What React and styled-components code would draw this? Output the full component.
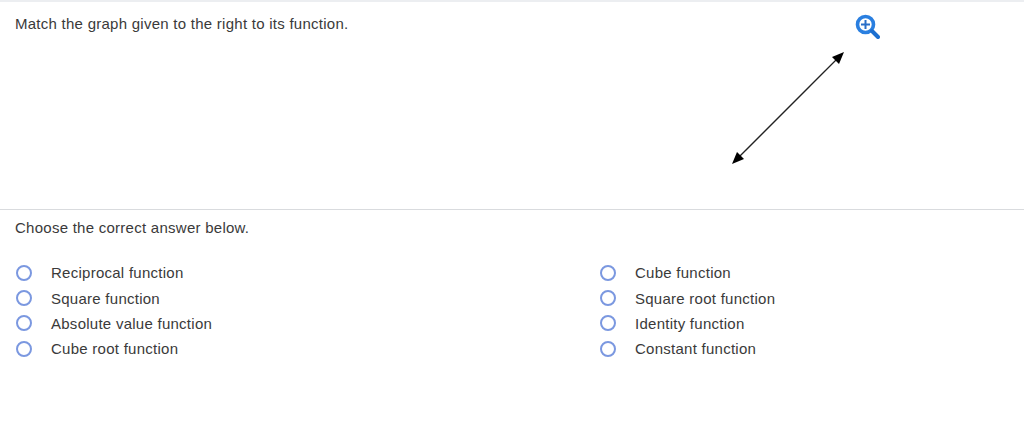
import styled, {createGlobalStyle} from "styled-components";

const GlobalStyle = createGlobalStyle`
  html, body {
    margin: 0;
    padding: 0;
    background: #fff;
  }
`

const Page = styled.div`
  width: 1024px;
  height: 442px;
  overflow: hidden;
  box-sizing: border-box;
  border-top: 2px solid #eceef1;
  font-family: "Liberation Sans", Arial, sans-serif;
  font-size: 15px;
  letter-spacing: 0.26px;
  color: #3a3a3a;
`

const QuestionRow = styled.div`
  display: flex;
  box-sizing: border-box;
  height: 208px;
  border-bottom: 1px solid #d9dbde;
  padding-left: 15px;
`

const Prompt = styled.div`
  width: 716px;
  padding-top: 14px;
  line-height: 16px;
`

const GraphColumn = styled.div`
  display: flex;
  flex-direction: column;
  align-items: flex-start;
`

const ZoomButton = styled.svg`
  display: block;
  width: 26px;
  height: 26px;
  margin: 12px 0 0 123px;
`

const Graph = styled.svg`
  display: block;
  width: 120px;
  height: 120px;
  margin: 6px 0 0 -1px;
`

const Answer = styled.div`
  padding: 10px 0 0 15px;
  line-height: 16px;
`

const Choices = styled.div`
  display: grid;
  grid-template-columns: 584px 300px;
  padding: 24.3px 0 0 16px;
`

const Column = styled.div`
  display: flex;
  flex-direction: column;
`

const Choice = styled.label`
  display: flex;
  align-items: center;
  height: 25.25px;
`

const Radio = styled.span`
  box-sizing: border-box;
  width: 16px;
  height: 16px;
  margin-right: 19px;
  border: 2px solid #7b98e0;
  border-radius: 50%;
  background: #fff;
`

const left = ["Reciprocal function", "Square function", "Absolute value function", "Cube root function"]
const right = ["Cube function", "Square root function", "Identity function", "Constant function"]

export default function App() {
	return (<Page>
		<GlobalStyle/>
		<QuestionRow>
			<Prompt>Match the graph given to the right to its function.</Prompt>
			<GraphColumn>
				<ZoomButton viewBox="0 0 26 26">
					<circle cx="11.5" cy="10.5" r="8" fill="#fff" stroke="#2a7fe0" strokeWidth="3.6"/>
					<path d="M11.5 6v9M7 10.5h9" stroke="#2a6fc8" strokeWidth="2"/>
					<path d="M18 17l6 6" stroke="#1c6fd0" strokeWidth="4" strokeLinecap="round"/>
				</ZoomButton>
				<Graph viewBox="0 0 120 120">
					<path d="M8 112L108 12" stroke="#222" strokeWidth="1.3"/>
					<path d="M114 6L102 11L109 18Z" fill="#000"/>
					<path d="M2 118L7 106L14 113Z" fill="#000"/>
				</Graph>
			</GraphColumn>
		</QuestionRow>
		<Answer>Choose the correct answer below.</Answer>
		<Choices>
			<Column>
				{left.map(text => <Choice key={text}><Radio/>{text}</Choice>)}
			</Column>
			<Column>
				{right.map(text => <Choice key={text}><Radio/>{text}</Choice>)}
			</Column>
		</Choices>
	</Page>)
}
